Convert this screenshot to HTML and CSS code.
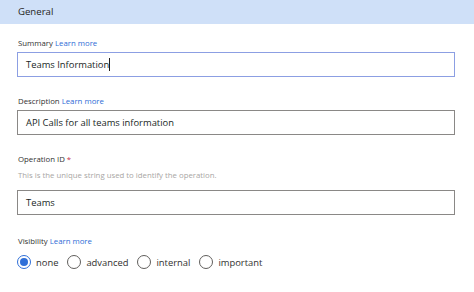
FILE: index.html
```html
<!DOCTYPE html>
<html lang="en">

<head>
    <meta charset="UTF-8">
    <meta name="viewport" content="width=device-width, initial-scale=1.0">
    <title>General</title>
    <link rel="stylesheet" href="styles.css">
</head>

<body>
    <!-- section header -->
    <div class="section-header">General</div>

    <div class="form">
        <!-- summary -->
        <div class="field field-first">
            <div class="label">Summary <a class="link" href="#">Learn more</a></div>
            <div class="input input-focus">Teams Information<span class="caret"></span></div>
        </div>

        <!-- description -->
        <div class="field">
            <div class="label">Description <a class="link" href="#">Learn more</a></div>
            <div class="input">API Calls for all teams information</div>
        </div>

        <!-- operation id -->
        <div class="field">
            <div class="label">Operation ID <span class="req">*</span></div>
            <div class="hint">This is the unique string used to identify the operation.</div>
            <div class="input input-hinted">Teams</div>
        </div>

        <!-- visibility -->
        <div class="field field-vis">
            <div class="label">Visibility <a class="link" href="#">Learn more</a></div>
            <div class="radios">
                <label class="radio"><span class="dot checked"></span>none</label>
                <label class="radio"><span class="dot"></span>advanced</label>
                <label class="radio"><span class="dot"></span>internal</label>
                <label class="radio"><span class="dot"></span>important</label>
            </div>
        </div>
    </div>
</body>

</html>
```

FILE: styles.css
```css
* {
    margin: 0;
    padding: 0;
    box-sizing: border-box;
}

body {
    background: #fff;
    font-family: "Open Sans", "Noto Sans", sans-serif;
    color: #323130;
    width: 474px;
    height: 292px;
    overflow: hidden;
}

.section-header {
    height: 24px;
    line-height: 24px;
    padding-left: 18px;
    background: #cfe0f8;
    font-size: 9.6px;
    color: #252423;
}

.form {
    display: flex;
    flex-direction: column;
    padding: 0 19px 0 17px;
}

.field {
    display: flex;
    flex-direction: column;
    margin-top: 18px;
}

.field-first {
    margin-top: 13px;
}

.field-vis {
    margin-top: 20px;
}

.label {
    font-size: 7.8px;
    line-height: 12px;
    padding-left: 1px;
    color: #323130;
}

.link {
    color: #2d6bd6;
    text-decoration: none;
}

.req {
    color: #c4314b;
}

.hint {
    margin-top: 4px;
    font-size: 7.8px;
    line-height: 12px;
    padding-left: 1px;
    color: #a8a6a4;
}

.input {
    margin-top: 3px;
    height: 25px;
    line-height: 23px;
    padding-left: 8px;
    border: 1px solid #8a8886;
    font-size: 9.4px;
    color: #201f1e;
}

.input-focus {
    border-color: #8c9fe3;
}

.input-hinted {
    margin-top: 9px;
}

.caret {
    display: inline-block;
    width: 1px;
    height: 13px;
    background: #201f1e;
    vertical-align: -3px;
}

.radios {
    display: flex;
    gap: 9px;
    margin-top: 7px;
    height: 16px;
    align-items: center;
}

.radio {
    display: flex;
    align-items: center;
    gap: 5px;
    font-size: 9.4px;
    color: #323130;
}

.dot {
    width: 14px;
    height: 14px;
    border-radius: 50%;
    border: 1px solid #605e5c;
    display: flex;
    justify-content: center;
    align-items: center;
}

.dot.checked {
    border-color: #2f6fd8;
}

.dot.checked::before {
    content: '';
    width: 8px;
    height: 8px;
    border-radius: 50%;
    background: #2f6fd8;
}
```
